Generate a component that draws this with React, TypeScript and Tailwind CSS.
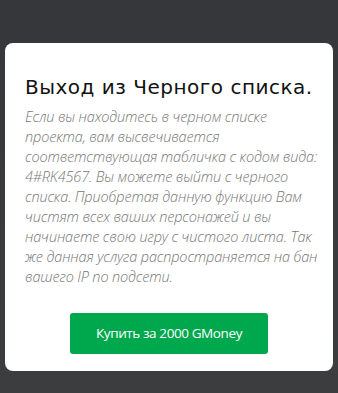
const lines = [
  'Если вы находитесь в черном списке',
  'проекта, вам высвечивается',
  'соответствующая табличка с кодом вида:',
  '4#RK4567. Вы можете выйти с черного',
  'списка. Приобретая данную функцию Вам',
  'чистят всех ваших персонажей и вы',
  'начинаете свою игру с чистого листа. Так',
  'же данная услуга распространяется на бан',
  'вашего IP по подсети.',
]

export default function App() {
  return (
    <div className="w-[338px] h-[393px] overflow-hidden bg-gradient-to-b from-[#36373a] to-[#3c3d3f] pt-[43px] px-[5px]">
      <div className="bg-white rounded-[8px] h-[328px] px-[20px] pt-[30px] flex flex-col">
        <h2 className="text-[20px] leading-[28px] text-[#111] tracking-[0.5px] font-['DejaVu_Sans',sans-serif] whitespace-nowrap">
          Выход из Черного списка.
        </h2>
        <p className="mt-[6px] text-[14.5px] leading-[20px] tracking-[-0.15px] italic font-light text-[#777] font-['Open_Sans',sans-serif] whitespace-nowrap">
          {lines.map(l => (
            <span key={l} className="block">{l}</span>
          ))}
        </p>
        <div className="mt-auto mb-[17px] flex justify-center">
          <button className="w-[198px] h-[41px] rounded-[3px] bg-[#00a84d] text-white text-[13.5px] font-['Open_Sans',sans-serif] tracking-[-0.4px]">
            Купить за 2000 GMoney
          </button>
        </div>
      </div>
    </div>
  )
}
